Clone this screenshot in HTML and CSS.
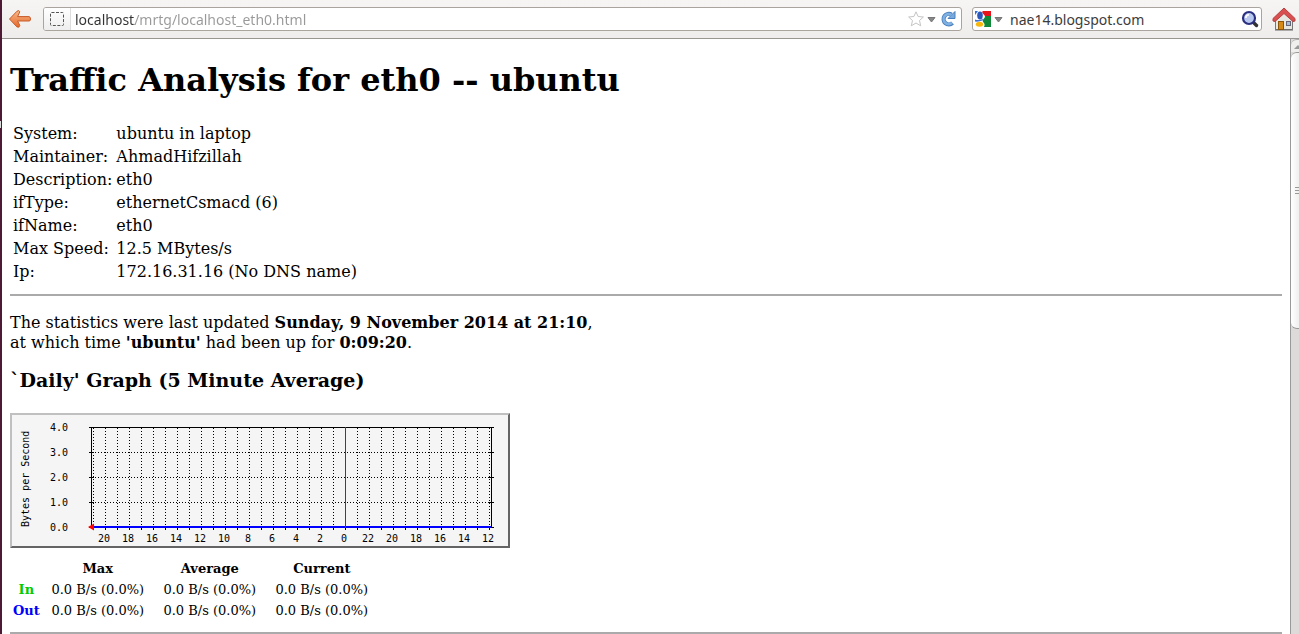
FILE: index.html
```html
<!DOCTYPE html>
<html lang="en">
<head>
  <meta charset="UTF-8" />
  <meta name="viewport" content="width=device-width, initial-scale=1" />
  <title>Traffic Analysis for eth0 -- ubuntu</title>
  <link rel="stylesheet" href="styles.css">
</head>
<body>
  <div class="launcher-edge"></div>

  <div class="window">
    <header class="toolbar">
      <button class="tool-btn" type="button" aria-label="Back">
        <svg width="24" height="22" viewBox="0 0 24 22">
          <defs>
            <linearGradient id="backFill" x1="0" y1="0" x2="0" y2="1">
              <stop offset="0" stop-color="#f8b98a" />
              <stop offset="1" stop-color="#e5682a" />
            </linearGradient>
          </defs>
          <path d="M1.5 11 9 3.2Q11 1.7 11.8 3.8L9.6 8.6H21Q22.5 8.8 22.5 11T21 13H9.6L11.8 17.4Q11.2 20.3 8.8 18.8Z" fill="url(#backFill)" stroke="#c75a28" stroke-linejoin="round" />
        </svg>
      </button>

      <form class="location">
        <span class="identity">
          <svg width="16" height="16" viewBox="0 0 16 16">
            <rect x="1.5" y="1.5" width="13" height="13" rx="1" fill="none" stroke="#555" stroke-dasharray="3 1.5" />
          </svg>
        </span>
        <input class="field url" type="text" aria-label="Address" value="localhost/mrtg/localhost_eth0.html" />
        <button class="field-btn" type="button" aria-label="Bookmark this page">
          <svg width="16" height="16" viewBox="0 0 16 16">
            <path d="M8 .8 10.1 5.5 15.4 6 11.5 9.5 12.7 14.8 8 12 3.3 14.8 4.5 9.5.6 6 5.9 5.5Z" fill="#fff" stroke="#c4c4c4" stroke-linejoin="round" />
          </svg>
        </button>
        <button class="field-btn" type="button" aria-label="Show history">
          <svg width="9" height="16" viewBox="0 0 9 16">
            <path d="M1 6.5H8L4.5 11Z" fill="#888" stroke="#777" />
          </svg>
        </button>
        <button class="field-btn" type="button" aria-label="Reload">
          <svg width="18" height="18" viewBox="0 0 18 18">
            <path d="M12.500 4.500A5.300 5.300 0 1 0 13.500 13" fill="none" stroke="#4a80bd" stroke-width="4.200" />
            <path d="M16 1.500V8.500H9Z" fill="#78aade" stroke="#4a80bd" stroke-linejoin="round" />
            <path d="M12.500 5A5 5 0 1 0 13 12.800" fill="none" stroke="#7fb0e2" stroke-width="2.600" />
          </svg>
        </button>
      </form>

      <form class="search">
        <button class="engine" type="button" aria-label="Choose search engine">
          <svg width="16" height="16" viewBox="0 0 16 16">
            <rect width="16" height="16" fill="#fff" />
            <path d="M8 0H16V5H10Q8 3 7 1Z" fill="#e8141c" />
            <path d="M10 5H16V16H9Q10.500 13 8 11Q7 9 8.500 8Q10 7 10 5Z" fill="#108a38" />
            <path d="M0 0H3L0 4Z" fill="#3470dc" />
            <ellipse cx="5" cy="4.500" rx="2.800" ry="4" fill="#2c58bc" />
            <path d="M0 8.500Q5 10 8 7.500L7.500 9.500Q4 11 0 10.500Z" fill="#3f74d4" />
            <ellipse cx="4.500" cy="13.200" rx="3.700" ry="2.500" fill="#f6b80c" />
          </svg>
          <svg width="9" height="16" viewBox="0 0 9 16">
            <path d="M1 6.5H8L4.5 11Z" fill="#888" stroke="#777" />
          </svg>
        </button>
        <input class="field" type="text" aria-label="Search" value="nae14.blogspot.com" />
        <button class="field-btn" type="submit" aria-label="Search">
          <svg width="18" height="18" viewBox="0 0 18 18">
            <path d="M12 12 15.500 15.500" stroke="#333" stroke-width="3.400" stroke-linecap="round" />
            <circle cx="8" cy="8" r="6" fill="#b9c8ee" stroke="#2b3180" stroke-width="2.200" />
            <path d="M4.800 8A3.400 3.400 0 0 1 8 4.800" fill="none" stroke="#fff" stroke-width="1.600" />
          </svg>
        </button>
      </form>

      <button class="tool-btn" type="button" aria-label="Home">
        <svg width="24" height="24" viewBox="0 0 24 24">
          <path d="M3.500 12 12 4 20.500 12V22.500H3.500Z" fill="#e8e8e3" stroke="#777" />
          <path d="M3 23H21" stroke="#666" />
          <rect x="6.500" y="14.500" width="5" height="8" fill="#d58a18" stroke="#8c5508" />
          <rect x="14.500" y="14.500" width="4" height="4" fill="#a4bfdc" stroke="#667" />
          <path d="M12 1 23 11.500V14L21 14.500 12 6.500 3 14.500 1 14V11.500Z" fill="#d85050" stroke="#b84040" stroke-linejoin="round" />
        </svg>
      </button>
    </header>

    <div class="viewport">
      <main class="page">
        <h1>Traffic Analysis for eth0 -- ubuntu</h1>

        <table class="details">
          <tr><td>System:</td><td>ubuntu in laptop</td></tr>
          <tr><td>Maintainer:</td><td>AhmadHifzillah</td></tr>
          <tr><td>Description:</td><td>eth0</td></tr>
          <tr><td>ifType:</td><td>ethernetCsmacd (6)</td></tr>
          <tr><td>ifName:</td><td>eth0</td></tr>
          <tr><td>Max Speed:</td><td>12.5 MBytes/s</td></tr>
          <tr><td>Ip:</td><td>172.16.31.16 (No DNS name)</td></tr>
        </table>

        <hr />

        <p class="updated">
          The statistics were last updated <strong>Sunday, 9 November 2014 at 21:10</strong>,<br />
          at which time <strong>'ubuntu'</strong> had been up for <strong>0:09:20</strong>.
        </p>

        <h2>`Daily' Graph (5 Minute Average)</h2>

        <svg class="graph" width="500" height="135" viewBox="0 0 500 135" role="img" aria-label="Daily traffic graph">
          <rect width="500" height="135" fill="#f5f5f5" />
          <path d="M0 0H500L498 2H2V133L0 135Z" fill="#c0c0c0" />
          <path d="M500 0V135H0L2 133H498V2Z" fill="#646464" />

          <g class="grid" id="grid">
            <path d="M82 39.500H482M82 64.500H482M82 89.500H482" />
          </g>
          <path class="axis" d="M79 14.500H484M79 39.500H84M79 64.500H84M79 89.500H84M479 39.500H484M479 64.500H484M479 89.500H484M81.500 14V115M481.500 14V115M79 114.500H484" />
          <path id="ticks" class="axis" />
          <path d="M82 113H481V115H82Z" fill="#00f" />
          <path d="M335.500 14V115" stroke="#e00000" />
          <path d="M78 114 84 110.500V117.500Z" fill="#f00" />

          <g class="label">
            <text x="40" y="18">4.0</text>
            <text x="40" y="43">3.0</text>
            <text x="40" y="68">2.0</text>
            <text x="40" y="93">1.0</text>
            <text x="40" y="118">0.0</text>
            <text transform="translate(19 114) rotate(-90)">Bytes per Second</text>
          </g>
          <g class="label hours" id="hours"></g>
        </svg>

        <table class="stats">
          <tr><th></th><th scope="col">Max</th><th scope="col">Average</th><th scope="col">Current</th></tr>
          <tr class="in"><th scope="row">In</th><td>0.0 B/s (0.0%)</td><td>0.0 B/s (0.0%)</td><td>0.0 B/s (0.0%)</td></tr>
          <tr class="out"><th scope="row">Out</th><td>0.0 B/s (0.0%)</td><td>0.0 B/s (0.0%)</td><td>0.0 B/s (0.0%)</td></tr>
        </table>

        <hr />
      </main>

      <div class="scrollbar">
        <div class="scroll-up">
          <svg width="16" height="14" viewBox="0 0 16 14"><path d="M3 9 7 5 11 9Z" fill="#999" /></svg>
        </div>
        <div class="scroll-thumb"><span></span><span></span><span></span></div>
      </div>
    </div>
  </div>

  <script src="graph.js"></script>
</body>
</html>
```

FILE: styles.css
```css
* {
  box-sizing: border-box;
}

body {
  margin: 0;
  height: 100vh;
  display: flex;
  overflow: hidden;
  background: #fff;
  color: #000;
  font-family: "DejaVu Serif", serif;
  font-size: 16px;
}

/* strip of the desktop at the left of the window */
.launcher-edge {
  flex: 0 0 2px;
  padding-top: 121px;
  background: #4c1a35;
}

.launcher-edge::before {
  content: "";
  display: block;
  width: 1px;
  height: 7px;
  background: #ddd;
}

.window {
  flex: 1;
  min-width: 0;
  display: flex;
  flex-direction: column;
}

/* Toolbar */
.toolbar {
  flex: none;
  display: flex;
  align-items: center;
  height: 39px;
  padding: 0 3px 0 6px;
  gap: 10px;
  background: linear-gradient(#f6f5f4, #efedeb);
  border-bottom: 1px solid #999590;
}

button {
  display: flex;
  align-items: center;
  flex: none;
  padding: 0;
  border: none;
  background: none;
}

.location,
.search {
  display: flex;
  align-items: center;
  height: 24px;
  background: #fff;
  border: 1px solid #aaa49e;
  border-radius: 3px;
  overflow: hidden;
}

.location {
  flex: 1;
  margin-left: 1px;
  padding-right: 4px;
  gap: 3px;
}

.search {
  width: 290px;
  padding: 0 2px;
}

.identity {
  display: flex;
  align-items: center;
  justify-content: center;
  align-self: stretch;
  width: 27px;
  background: linear-gradient(#fff, #eee);
  border-right: 1px solid #ddd;
}

.engine {
  gap: 3px;
}

.field {
  flex: 1;
  min-width: 0;
  height: 22px;
  padding: 0 0 0 7px;
  border: none;
  outline: none;
  background: none;
  color: #3c3c3c;
  font-family: "Noto Sans", sans-serif;
  font-size: 14px;
}

/* host part is darker than the path */
.url {
  padding-left: 1px;
  background: linear-gradient(90deg, #333 61px, #999 61px);
  -webkit-background-clip: text;
  background-clip: text;
  color: transparent;
}

/* Page */
.viewport {
  flex: 1;
  min-height: 0;
  display: flex;
}

.page {
  flex: 1;
  min-width: 0;
  padding: 0 8px;
  overflow: hidden;
}

h1 {
  margin: 22px 0 21px;
  font-size: 32px;
  line-height: 39px;
}

h2 {
  margin: 16px 0 21px;
  font-size: 19px;
  line-height: 23px;
}

hr {
  height: 2px;
  margin: 10px 0 17px;
  border: none;
  background: #aaa;
}

.details td {
  padding: 1px;
  line-height: 19px;
}

.updated {
  margin: 0;
  line-height: 20px;
}

.graph {
  display: block;
}

.grid {
  fill: none;
  stroke: #000;
  stroke-dasharray: 1 2;
}

.axis {
  fill: none;
  stroke: #000;
}

.label {
  font-family: "DejaVu Sans Mono", monospace;
  font-size: 10px;
}

.hours {
  text-anchor: middle;
}

.stats {
  margin-top: 9px;
  font-size: 13px;
}

.stats th,
.stats td {
  padding: 1px;
  line-height: 17px;
}

.stats th:not(:first-child),
.stats td {
  min-width: 110px;
  text-align: center;
}

.stats .in th {
  color: #00cc00;
}

.stats .out th {
  color: #0000ff;
}

/* Scrollbar, runs off the right edge */
.scrollbar {
  flex: 0 0 9px;
  overflow: hidden;
  background: #dedad9;
  border-left: 1px solid #999;
}

.scroll-up {
  width: 16px;
  height: 13px;
  background: #f0efee;
  border-top: 1px solid #aaa;
  border-radius: 6px 0 0 0;
}

.scroll-up svg {
  display: block;
}

.scroll-thumb {
  display: flex;
  flex-direction: column;
  justify-content: center;
  gap: 2px;
  width: 16px;
  height: 277px;
  padding-left: 4px;
  background: linear-gradient(90deg, #fff, #e4e2e0);
  border: 1px solid #999;
  border-left: none;
  border-radius: 6px;
}

.scroll-thumb span {
  width: 7px;
  height: 1px;
  background: #999;
}
```

FILE: graph.js
```js
// one vertical line per hour, a label for every second one
const grid = document.getElementById("grid");
const hours = document.getElementById("hours");
const ns = "http://www.w3.org/2000/svg";
let ticks = "";

for (let i = 0; i <= 33; i++) {
  const x = 83 + i * 12;
  const line = document.createElementNS(ns, "path");
  line.setAttribute("d", `M${x + 0.5} 15V114`);
  grid.appendChild(line);
  ticks += `M${x + 0.5} 113V117`;

  if (i % 2 === 1) {
    const text = document.createElementNS(ns, "text");
    text.setAttribute("x", x - 1);
    text.setAttribute("y", 129);
    text.textContent = (45 - i) % 24;
    hours.appendChild(text);
  }
}

document.getElementById("ticks").setAttribute("d", ticks);
```
